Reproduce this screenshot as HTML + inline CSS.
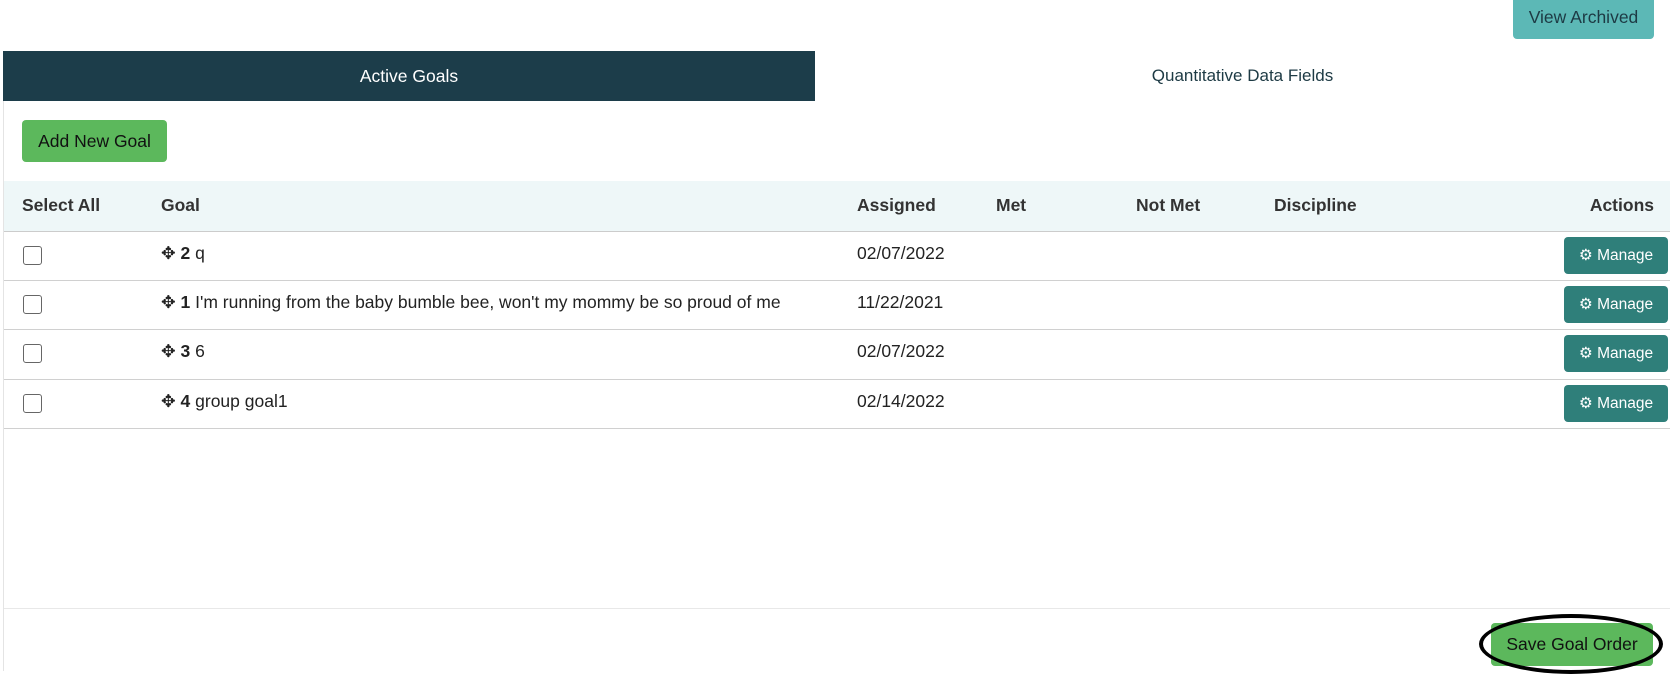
<!DOCTYPE html>
<html><head><style>
body{margin:0;width:1670px;height:671px;background:#fff;font-family:"Liberation Sans",sans-serif;color:#222;position:relative;overflow:hidden;font-size:17.5px}
.a{position:absolute}
.vl{left:3px;top:51px;width:1px;height:620px;background:#e4e4e4}
.btn{position:absolute;border-radius:4px;display:flex;align-items:center;justify-content:center;font-size:17.5px}
.hdr{left:4px;top:181px;width:1666px;height:50px;background:#eef7f8;border-bottom:1px solid #ccc}
.th{position:absolute;top:195px;font-weight:bold;font-size:17.5px;color:#333}
.line{position:absolute;left:4px;width:1666px;height:1px;background:#d0d0d0}
.cb{position:absolute;left:23px;width:17px;height:17px;border:1.5px solid #666;border-radius:3px;background:#fff}
.gt{position:absolute;left:161px;font-size:17.5px}
.dt{position:absolute;left:857px;font-size:17.5px}
.mg{position:absolute;left:1564px;width:104px;height:37px;background:#2f7f7a;color:#fff;border-radius:4px;font-size:15.5px;display:flex;align-items:center;justify-content:center;gap:5px}
</style></head><body>
<div class="vl a"></div>
<div class="btn" style="left:1513px;top:-4px;width:141px;height:43px;background:#5cb8b6;color:#1d3a44">View Archived</div>
<div class="a" style="left:3px;top:51px;width:812px;height:50px;background:#1c3d4a;color:#fff;display:flex;align-items:center;justify-content:center;font-size:17.5px">Active Goals</div>
<div class="a" style="left:815px;top:51px;width:855px;height:50px;color:#1d3a44;display:flex;align-items:center;justify-content:center;font-size:17px">Quantitative Data Fields</div>
<div class="btn" style="left:22px;top:120px;width:145px;height:42px;background:#5cb85c;color:#111">Add New Goal</div>
<div class="a hdr"></div>
<div class="th" style="left:22px">Select All</div>
<div class="th" style="left:161px">Goal</div>
<div class="th" style="left:857px">Assigned</div>
<div class="th" style="left:996px">Met</div>
<div class="th" style="left:1136px">Not Met</div>
<div class="th" style="left:1274px">Discipline</div>
<div class="th" style="left:1554px;width:100px;text-align:right">Actions</div>

<div class="cb" style="top:246px"></div><div class="gt" style="top:243px">✥ <b>2</b> q</div><div class="dt" style="top:243px">02/07/2022</div><div class="mg" style="top:237px">⚙ Manage</div>
<div class="line" style="top:280px"></div>
<div class="cb" style="top:295px"></div><div class="gt" style="top:292px">✥ <b>1</b> I'm running from the baby bumble bee, won't my mommy be so proud of me</div><div class="dt" style="top:292px">11/22/2021</div><div class="mg" style="top:286px">⚙ Manage</div>
<div class="line" style="top:329px"></div>
<div class="cb" style="top:344px"></div><div class="gt" style="top:341px">✥ <b>3</b> 6</div><div class="dt" style="top:341px">02/07/2022</div><div class="mg" style="top:335px">⚙ Manage</div>
<div class="line" style="top:379px"></div>
<div class="cb" style="top:394px"></div><div class="gt" style="top:391px">✥ <b>4</b> group goal1</div><div class="dt" style="top:391px">02/14/2022</div><div class="mg" style="top:385px">⚙ Manage</div>
<div class="line" style="top:428px"></div>
<div class="line" style="top:608px;background:#e8e8e8"></div>
<div class="btn" style="left:1491px;top:623px;width:162px;height:43px;background:#5cb85c;color:#111">Save Goal Order</div>
<div class="a" style="left:1479px;top:614px;width:176px;height:52px;border:4px solid #000;border-radius:50%"></div>
</body></html>
